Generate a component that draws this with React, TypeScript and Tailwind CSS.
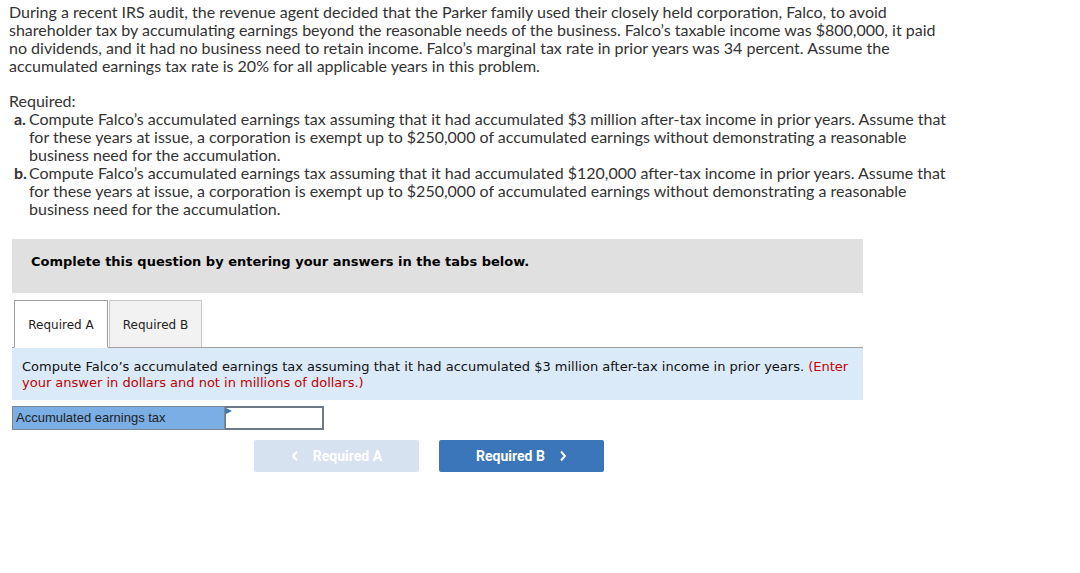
import React from 'react'

const intro = [
  'During a recent IRS audit, the revenue agent decided that the Parker family used their closely held corporation, Falco, to avoid',
  'shareholder tax by accumulating earnings beyond the reasonable needs of the business. Falco’s taxable income was $800,000, it paid',
  'no dividends, and it had no business need to retain income. Falco’s marginal tax rate in prior years was 34 percent. Assume the',
  'accumulated earnings tax rate is 20% for all applicable years in this problem.',
]

const items = [
  {
    tag: 'a.',
    lines: [
      'Compute Falco’s accumulated earnings tax assuming that it had accumulated $3 million after-tax income in prior years. Assume that',
      'for these years at issue, a corporation is exempt up to $250,000 of accumulated earnings without demonstrating a reasonable',
      'business need for the accumulation.',
    ],
  },
  {
    tag: 'b.',
    lines: [
      'Compute Falco’s accumulated earnings tax assuming that it had accumulated $120,000 after-tax income in prior years. Assume that',
      'for these years at issue, a corporation is exempt up to $250,000 of accumulated earnings without demonstrating a reasonable',
      'business need for the accumulation.',
    ],
  },
]

const App: React.FC = () => {
  return (
    <div className="w-[1080px] h-[573px] bg-white overflow-hidden">
      {/* problem statement */}
      <div className="pl-[9px] pt-[3px] text-[16px] leading-[18px] text-[#333] font-['Lato',sans-serif]">
        <div>
          {intro.map((line, i) => (
            <div key={i} className="whitespace-nowrap">{line}</div>
          ))}
        </div>
        <div className="mt-[17px]">Required:</div>
        {items.map((item) => (
          <div key={item.tag} className="flex pl-[5px]">
            <span className="w-[15px] font-bold">{item.tag}</span>
            <div>
              {item.lines.map((line, i) => (
                <div key={i} className="whitespace-nowrap">{line}</div>
              ))}
            </div>
          </div>
        ))}
      </div>

      {/* answer area */}
      <div className="ml-[12px] mt-[21px] w-[851px] font-['Verdana','DejaVu_Sans',sans-serif]">
        <div className="h-[54px] bg-[#e0e0e0] pl-[19px] pt-[15px] text-[13px] leading-[16px] font-bold text-black">
          Complete this question by entering your answers in the tabs below.
        </div>

        <div className="mt-[7px] flex items-end pl-[2px] border-b border-[#a0a0a0]">
          <div className="h-[48px] w-[94px] -mb-px pt-[2px] flex items-center justify-center border border-[#a0a0a0] border-b-white bg-white text-[12px] text-[#222]">
            Required A
          </div>
          <div className="ml-[1px] h-[47px] w-[93px] pt-[2px] flex items-center justify-center border border-b-0 border-[#c8c8c8] bg-[#f2f2f2] text-[12px] text-[#222]">
            Required B
          </div>
        </div>

        <div className="h-[52px] bg-[#dbeaf8] pl-[10px] pt-[11px] text-[13px] leading-[16px] text-[#111]">
          <div className="whitespace-nowrap">
            Compute Falco’s accumulated earnings tax assuming that it had accumulated $3 million after-tax income in prior years.{' '}
            <span className="text-[#c00000]">(Enter</span>
          </div>
          <div className="whitespace-nowrap text-[#c00000]">your answer in dollars and not in millions of dollars.)</div>
        </div>

        <div className="mt-[6px] flex h-[24px] font-['Liberation_Sans',Arial,sans-serif]">
          <div className="w-[213px] bg-[#7aaee5] border border-[#7b8796] pl-[3px] text-[13px] leading-[22px] text-[#222]">
            Accumulated earnings tax
          </div>
          <div className="relative w-[99px] bg-white border-2 border-l border-[#6c7a88]">
            <svg className="absolute left-0 top-0" width="6" height="6" viewBox="0 0 6 6">
              <polygon points="0,0 6,3 0,6" fill="#3a76b9" />
            </svg>
          </div>
        </div>

        <div className="mt-[10px] flex pl-[242px] gap-[20px] font-['Roboto',sans-serif] text-[14px] font-bold text-white">
          <div className="h-[32px] w-[165px] rounded-[2px] bg-[#d6e2f0] flex items-center justify-center gap-[14px]">
            <svg width="8" height="12" viewBox="0 0 8 12">
              <path d="M6 1.5 L2 6 L6 10.5" fill="none" stroke="white" strokeWidth="2" />
            </svg>
            <span>Required A</span>
          </div>
          <div className="h-[32px] w-[165px] rounded-[2px] bg-[#3a76b9] flex items-center justify-center gap-[14px]">
            <span>Required B</span>
            <svg width="8" height="12" viewBox="0 0 8 12">
              <path d="M2 1.5 L6 6 L2 10.5" fill="none" stroke="white" strokeWidth="2" />
            </svg>
          </div>
        </div>
      </div>
    </div>
  )
}

export default App
